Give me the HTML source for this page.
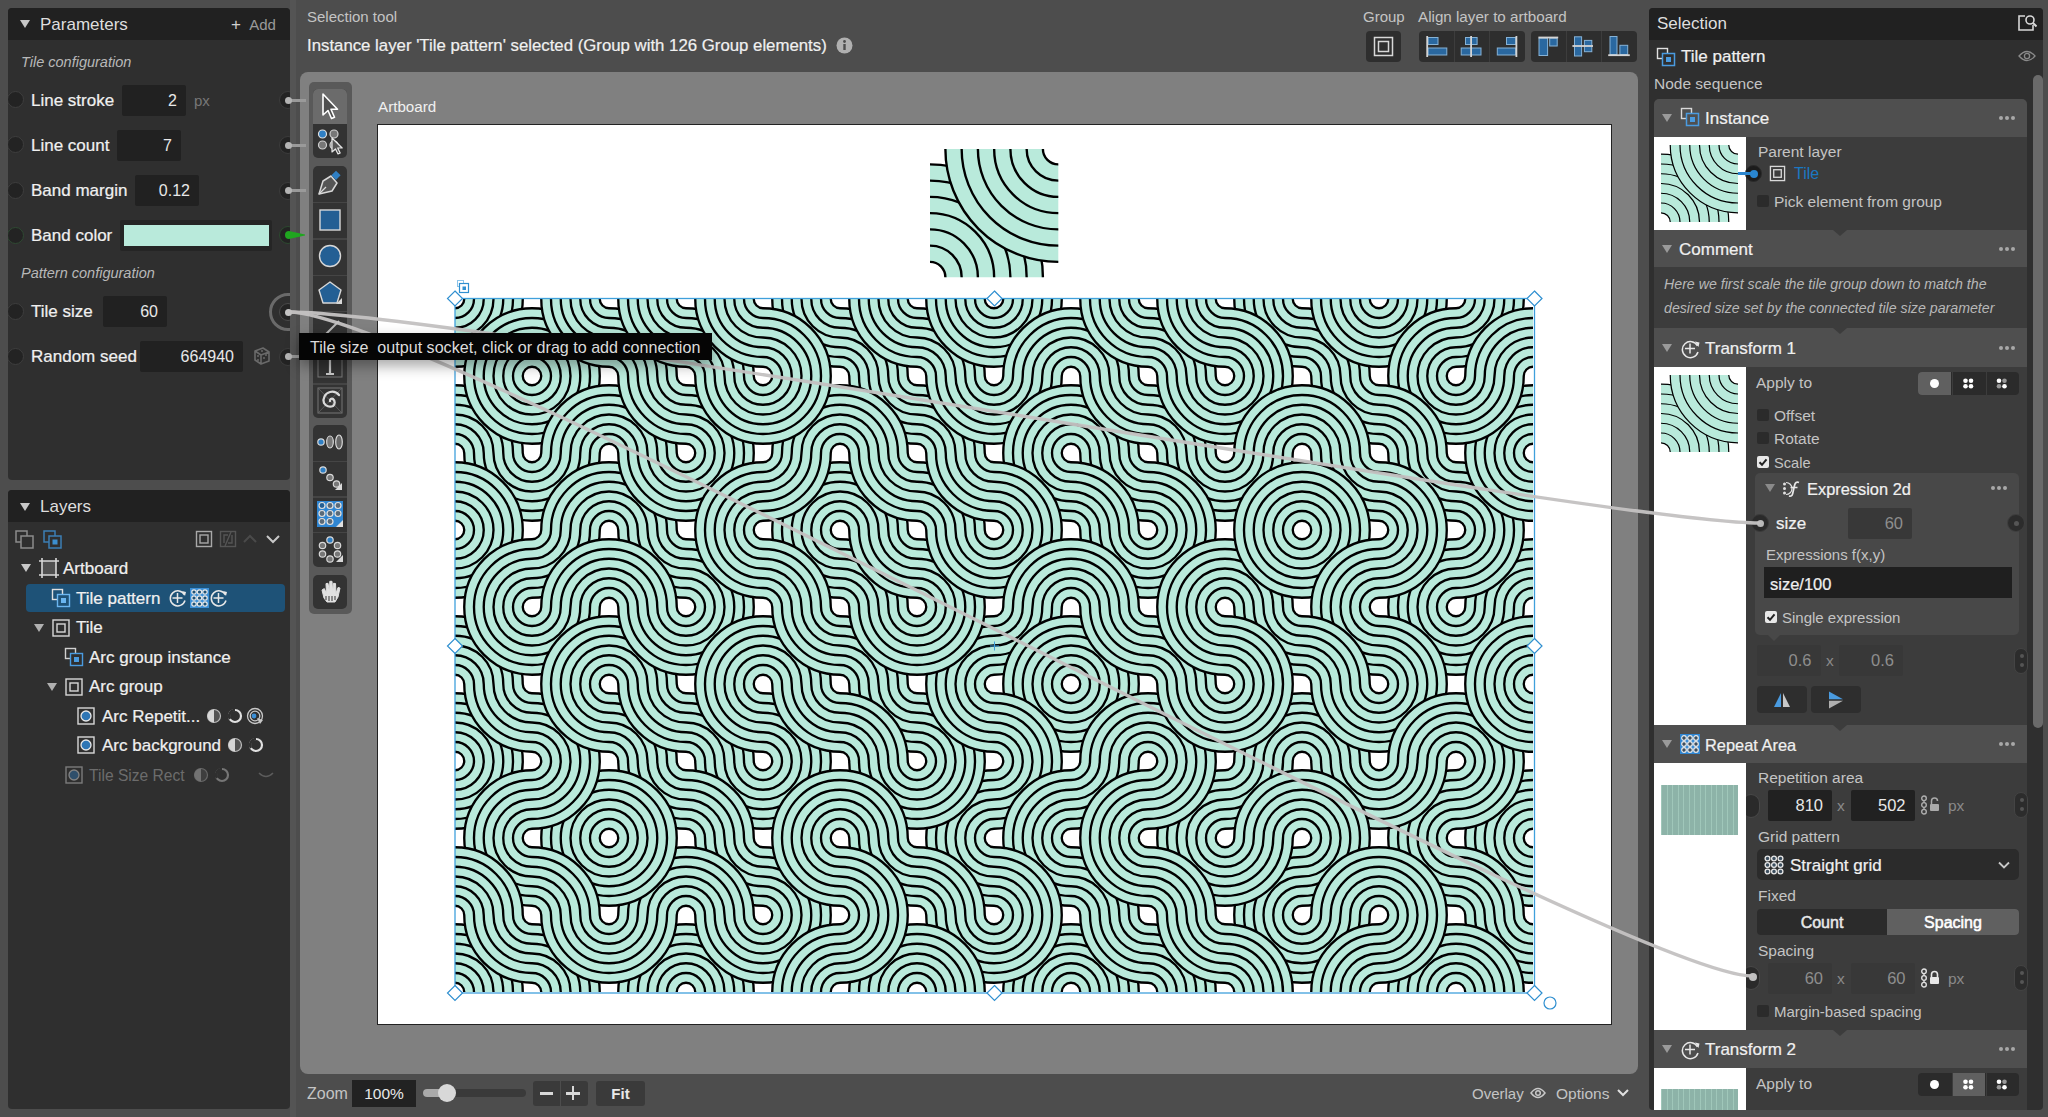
<!DOCTYPE html><html><head><meta charset="utf-8"><title>Tile pattern</title><style>*{box-sizing:border-box}
html,body{margin:0;padding:0}
body{width:2048px;height:1117px;overflow:hidden;background:#4d4d4d;font-family:"Liberation Sans",sans-serif;color:#e6e6e6;font-size:16px;position:relative}
.abs{position:absolute}
.panel{position:absolute;background:#2f2f2f;border-radius:4px;overflow:hidden}
.phead{position:absolute;left:0;top:0;right:0;height:32px;background:#212121}
.t{position:absolute;white-space:nowrap;line-height:20px;height:20px;margin-top:1px}
.w{color:#f0f0f0;-webkit-text-stroke:.22px #f0f0f0}
.g{color:#c4c4c4}
.dim{color:#8a8a8a}
.it{font-style:italic;color:#b8b8b8}
.inp{position:absolute;background:#212121;border-radius:2px;height:31px;color:#e8e8e8;text-align:right;padding-right:9px;line-height:31px;font-size:16px}
.inpd{background:#383838;color:#8e8e8e}
.sockL{position:absolute;width:17px;height:17px;border-radius:50%;background:#232323;border:1.5px solid #3e3e3e}
.sockR{position:absolute;width:18px;height:18px;border-radius:50%;background:#232323;border:1.5px solid #3c3c3c}
.dot{position:absolute;width:7px;height:7px;border-radius:50%;background:#b4b4b4}
.stem{position:absolute;height:3px;background:#9a9a9a}
.cb{position:absolute;width:12px;height:12px;background:#2b2b2b;border-radius:2px}
.cbc{position:absolute;width:12px;height:12px;background:#e8e8e8;border-radius:2px}
.tri{position:absolute;width:0;height:0;border-left:5px solid transparent;border-right:5px solid transparent;border-top:8px solid #c8c8c8}
.tb{position:absolute;left:313px;width:34px;background:#333;}
.nh{position:absolute;left:0;width:373px;background:#4f4f4f}
.nb{position:absolute;left:0;width:373px;background:#3c3c3c}
.thumb{position:absolute;left:0;width:92px;background:#fff}
.dots3{position:absolute;width:16px;height:4px}
.dots3 i{position:absolute;top:0;width:4px;height:4px;border-radius:50%;background:#a8a8a8}
.notch{position:absolute;width:0;height:0;border-left:7px solid transparent;border-right:7px solid transparent;border-top:6px solid #3c3c3c}

.ht{color:#dedede;-webkit-text-stroke:0}
</style></head><body><!-- PARAMETERS PANEL -->
<div class="panel" style="left:8px;top:8px;width:282px;height:472px">
 <div class="phead"></div>
 <div class="tri" style="left:12px;top:12px"></div>
 <div class="t ht" style="left:32px;top:6px;font-size:17px">Parameters</div>
 <div class="t g" style="left:223px;top:6px;font-size:15px;color:#9a9a9a"><span style="color:#d0d0d0;font-size:17px">+</span>&nbsp;&nbsp;Add</div>
 <div class="t it" style="left:13px;top:43px;font-size:14.5px">Tile configuration</div>
 <div class="t it" style="left:13px;top:254px;font-size:14.5px">Pattern configuration</div>

 <div class="t w" style="left:23px;top:82px;font-size:17px">Line stroke</div>
 <div class="inp" style="left:114px;top:77px;width:64px">2</div>
 <div class="t dim" style="left:186px;top:82px;font-size:15px;color:#777">px</div>

 <div class="t w" style="left:23px;top:127px;font-size:17px">Line count</div>
 <div class="inp" style="left:109px;top:122px;width:64px">7</div>

 <div class="t w" style="left:23px;top:172px;font-size:17px">Band margin</div>
 <div class="inp" style="left:127px;top:167px;width:64px">0.12</div>

 <div class="t w" style="left:23px;top:217px;font-size:17px">Band color</div>
 <div class="abs" style="left:112px;top:212px;width:152px;height:31px;background:#252525;border-radius:2px"></div>
 <div class="abs" style="left:116px;top:217px;width:145px;height:21px;background:#b9eadb"></div>

 <div class="t w" style="left:23px;top:293px;font-size:17px">Tile size</div>
 <div class="inp" style="left:95px;top:288px;width:64px">60</div>

 <div class="t w" style="left:23px;top:338px;font-size:17px">Random seed</div>
 <div class="inp" style="left:132px;top:333px;width:103px">664940</div>
 <svg class="abs" style="left:245px;top:338px" width="18" height="20" viewBox="0 0 18 20"><path d="M2 5L10 2L16 6L16 15L8 18L2 14Z M2 5L8 9L16 6M8 9L8 18" fill="none" stroke="#6a6a6a" stroke-width="1.6" stroke-linejoin="round"/><circle cx="5" cy="10" r="1" fill="#6a6a6a"/><circle cx="5" cy="14" r="1" fill="#6a6a6a"/><circle cx="11" cy="12" r="1" fill="#6a6a6a"/><circle cx="13" cy="9" r="1" fill="#6a6a6a"/><circle cx="9" cy="5" r="1" fill="#6a6a6a"/></svg>

 <!-- left sockets -->
 <div class="sockL" style="left:-1px;top:83px"></div>
 <div class="sockL" style="left:-1px;top:128px"></div>
 <div class="sockL" style="left:-1px;top:174px"></div>
 <div class="sockL" style="left:-1px;top:219px;border-color:#2f4a33"></div>
 <div class="sockL" style="left:-1px;top:295px"></div>
 <div class="sockL" style="left:-1px;top:340px"></div>
 <!-- right sockets (clipped by panel) -->
 <div class="sockR" style="left:271px;top:83px"></div>
 <div class="sockR" style="left:271px;top:128px"></div>
 <div class="sockR" style="left:271px;top:173.500px"></div>
 <div class="sockR" style="left:271px;top:218px;border-color:#2d4a30"></div>
 <div class="abs" style="left:261px;top:285px;width:38px;height:38px;border-radius:50%;border:3px solid #6a6a6a"></div>
 <div class="sockR" style="left:271px;top:295px;background:#242424;border-color:#4a4a4a"></div>
 <div class="sockR" style="left:271px;top:339.500px"></div>
</div>
<!-- LAYERS PANEL -->
<div class="panel" style="left:8px;top:490px;width:282px;height:619px">
 <div class="phead"></div>
 <div class="tri" style="left:12px;top:13px"></div>
 <div class="t ht" style="left:32px;top:6px;font-size:17px">Layers</div>
 
 <!-- toolbar icons -->
 <svg class="abs" style="left:6px;top:39px" width="60" height="22" viewBox="0 0 60 22"><g fill="none" stroke="#8c8c8c" stroke-width="1.5"><rect x="2" y="2" width="11" height="11"/><rect x="7" y="7" width="12" height="12" fill="#2f2f2f"/></g><g fill="none" stroke="#3c7fb5" stroke-width="1.5"><rect x="30" y="2" width="11" height="11"/><rect x="35" y="7" width="12" height="12" fill="#2f2f2f"/></g><rect x="38.5" y="10.5" width="5" height="5" fill="#3c8fd0"/></svg>
 <svg class="abs" style="left:186px;top:39px" width="92" height="22" viewBox="0 0 92 22"><g fill="none" stroke="#a8a8a8" stroke-width="1.4"><rect x="2.5" y="2.5" width="15" height="15"/><rect x="6" y="6" width="8" height="8"/></g><g fill="none" stroke="#555" stroke-width="1.4"><rect x="26.500" y="2.5" width="15" height="15"/><path d="M30 14V6h4M38 6v8h-4M37 3l-6 14"/></g><path d="M50 13l6-6 6 6" fill="none" stroke="#4a4a4a" stroke-width="2"/><path d="M73 7l6 6 6-6" fill="none" stroke="#c8c8c8" stroke-width="2"/></svg>

 <!-- rows -->
 <div class="tri" style="left:13px;top:74px"></div>
 <svg class="abs" style="left:30px;top:67px" width="22" height="22" viewBox="0 0 22 22"><rect x="4" y="4" width="14" height="14" fill="#505050"/><path d="M4 1v20M18 1v20M1 4h20M1 18h20" stroke="#d8d8d8" stroke-width="1.6" fill="none"/></svg>
 <div class="t w" style="left:55px;top:68px;font-size:17px">Artboard</div>

 <div class="abs" style="left:18px;top:94px;width:259px;height:28px;background:#1e5277;border-radius:4px"></div>
 <svg class="abs" style="left:43px;top:98px" width="20" height="20" viewBox="0 0 20 20"><g fill="none" stroke="#e0e0e0" stroke-width="1.4"><rect x="1.5" y="1.500" width="10" height="10"/></g><rect x="6.5" y="6.5" width="12" height="12" fill="#1e5277" stroke="#6bb6f0" stroke-width="1.4"/><rect x="10" y="10" width="5" height="5" fill="#6bb6f0"/></svg>
 <div class="t w" style="left:68px;top:98px;font-size:17px">Tile pattern</div>
 <svg class="abs" style="left:160px;top:97px" width="62" height="22" viewBox="0 0 62 22"><g fill="none" stroke="#e8e8e8" stroke-width="1.5"><path d="M16.500 8a7.500 7.500 0 1 0 .5 5.500"/><path d="M9.500 6v10M4.500 11h10"/><path d="M57.500 8a7.500 7.500 0 1 0 .5 5.500"/><path d="M50.500 6v10M45.500 11h10"/></g><path d="M14 4l4 1-1 4z" fill="#e8e8e8"/><path d="M55 4l4 1-1 4z" fill="#e8e8e8"/><rect x="22" y="1" width="19" height="20" fill="#3b8fd6"/><g fill="#1e5277" stroke="#e8e8e8" stroke-width="1.2"><circle cx="26" cy="5" r="2.200"/><circle cx="31.500" cy="5" r="2.200"/><circle cx="37" cy="5" r="2.200"/><circle cx="26" cy="11" r="2.200"/><circle cx="31.500" cy="11" r="2.200"/><circle cx="37" cy="11" r="2.200"/><circle cx="26" cy="17" r="2.200"/><circle cx="31.500" cy="17" r="2.200"/><circle cx="37" cy="17" r="2.200"/></g></svg>

 <div class="tri" style="left:26px;top:134px;border-top-color:#b0b0b0"></div>
 <svg class="abs" style="left:43px;top:128px" width="20" height="20" viewBox="0 0 20 20"><g fill="none" stroke="#d8d8d8" stroke-width="1.4"><rect x="2" y="2" width="16" height="16"/><rect x="6" y="6" width="8" height="8"/></g></svg>
 <div class="t w" style="left:68px;top:127px;font-size:17px">Tile</div>

 <svg class="abs" style="left:56px;top:157px" width="20" height="20" viewBox="0 0 20 20"><g fill="none" stroke="#d0d0d0" stroke-width="1.4"><rect x="1.5" y="1.500" width="10" height="10"/></g><rect x="6.5" y="6.5" width="12" height="12" fill="#2f2f2f" stroke="#4a9be0" stroke-width="1.4"/><rect x="10" y="10" width="5" height="5" fill="#4a9be0"/></svg>
 <div class="t w" style="left:81px;top:157px;font-size:17px">Arc group instance</div>

 <div class="tri" style="left:39px;top:193px;border-top-color:#b0b0b0"></div>
 <svg class="abs" style="left:56px;top:187px" width="20" height="20" viewBox="0 0 20 20"><g fill="none" stroke="#d8d8d8" stroke-width="1.4"><rect x="2" y="2" width="16" height="16"/><rect x="6" y="6" width="8" height="8"/></g></svg>
 <div class="t w" style="left:81px;top:186px;font-size:17px">Arc group</div>

 <svg class="abs" style="left:68px;top:216px" width="20" height="20" viewBox="0 0 20 20"><rect x="2" y="2" width="16" height="16" fill="none" stroke="#d8d8d8" stroke-width="1.4"/><circle cx="10" cy="10" r="5" fill="#2f76b5" stroke="#e8e8e8" stroke-width="1.3"/></svg>
 <div class="t w" style="left:94px;top:216px;font-size:17px">Arc Repetit...</div>
 <svg class="abs" style="left:197px;top:216px" width="64" height="20" viewBox="0 0 64 20"><circle cx="9" cy="10" r="6.500" fill="#555" stroke="#bbb" stroke-width="1.2"/><path d="M9 3.500a6.500 6.500 0 0 0 0 13z" fill="#d8d8d8"/><circle cx="30" cy="10" r="6" fill="none" stroke="#e0e0e0" stroke-width="2.200"/><path d="M30 4a6 6 0 0 0-5 9" stroke="#2f2f2f" stroke-width="2.600" fill="none"/><circle cx="50" cy="10" r="7.500" fill="none" stroke="#c8c8c8" stroke-width="1.300"/><circle cx="50" cy="10" r="4.800" fill="none" stroke="#c8c8c8" stroke-width="1.300"/><circle cx="49" cy="10" r="2.400" fill="#3b8fd6"/><path d="M52 12l6 2-3 4z" fill="#c8c8c8"/></svg>

 <svg class="abs" style="left:68px;top:245px" width="20" height="20" viewBox="0 0 20 20"><rect x="2" y="2" width="16" height="16" fill="none" stroke="#d8d8d8" stroke-width="1.4"/><circle cx="10" cy="10" r="5" fill="#2f76b5" stroke="#e8e8e8" stroke-width="1.3"/></svg>
 <div class="t w" style="left:94px;top:245px;font-size:17px">Arc background</div>
 <svg class="abs" style="left:218px;top:245px" width="44" height="20" viewBox="0 0 44 20"><circle cx="9" cy="10" r="6.500" fill="#555" stroke="#bbb" stroke-width="1.2"/><path d="M9 3.500a6.500 6.500 0 0 0 0 13z" fill="#d8d8d8"/><circle cx="30" cy="10" r="6" fill="none" stroke="#e0e0e0" stroke-width="2.200"/><path d="M30 4a6 6 0 0 0-5 9" stroke="#2f2f2f" stroke-width="2.600" fill="none"/></svg>

 <svg class="abs" style="left:56px;top:275px;opacity:.45" width="20" height="20" viewBox="0 0 20 20"><rect x="2" y="2" width="16" height="16" fill="none" stroke="#d8d8d8" stroke-width="1.4"/><circle cx="10" cy="10" r="5" fill="#2f76b5" stroke="#e8e8e8" stroke-width="1.3"/></svg>
 <div class="t" style="left:81px;top:275px;font-size:15.600px;color:#6c6c6c">Tile Size Rect</div>
 <svg class="abs" style="left:184px;top:275px;opacity:.4" width="44" height="20" viewBox="0 0 44 20"><circle cx="9" cy="10" r="6.500" fill="#555" stroke="#bbb" stroke-width="1.2"/><path d="M9 3.500a6.500 6.500 0 0 0 0 13z" fill="#d8d8d8"/><circle cx="30" cy="10" r="6" fill="none" stroke="#e0e0e0" stroke-width="2.200"/><path d="M30 4a6 6 0 0 0-5 9" stroke="#2f2f2f" stroke-width="2.600" fill="none"/></svg>
 <svg class="abs" style="left:249px;top:279px" width="18" height="12" viewBox="0 0 18 12"><path d="M2 4q7 7 14 0" fill="none" stroke="#5c5c5c" stroke-width="1.500"/></svg>
</div>

<!-- TOP BAR -->
<div class="abs" style="left:290px;top:0;width:5.500px;height:1117px;background:#545454"></div>
<div class="t g" style="margin-top:0;left:307px;top:6.500px;font-size:15px">Selection tool</div>
<div class="t" style="margin-top:0;color:#f0f0f0;-webkit-text-stroke:.2px #f0f0f0;left:307px;top:36px;font-size:16.800px">Instance layer 'Tile pattern' selected (Group with 126 Group elements)</div>
<svg class="abs" style="left:836px;top:37px" width="17" height="17" viewBox="0 0 17 17"><circle cx="8.500" cy="8.500" r="8" fill="#b0b0b0"/><rect x="7.300" y="7" width="2.400" height="6" fill="#4d4d4d"/><circle cx="8.500" cy="4.500" r="1.400" fill="#4d4d4d"/></svg>
<div class="t g" style="margin-top:0;left:1363px;top:7px;font-size:15px">Group</div>
<div class="t g" style="margin-top:0;left:1418px;top:7px;font-size:15.200px">Align layer to artboard</div>
<div class="abs" style="left:1366px;top:31px;width:35px;height:31px;background:#2e2e2e;border-radius:4px"></div>
<svg class="abs" style="left:1373px;top:36px" width="21" height="21" viewBox="0 0 21 21"><g fill="none" stroke="#d8d8d8" stroke-width="1.500"><rect x="1.500" y="1.500" width="18" height="18"/><rect x="5.500" y="5.500" width="10" height="10"/></g></svg>
<div class="abs" style="left:1419px;top:31px;width:106px;height:31px;background:#2e2e2e;border-radius:4px"></div>
<div class="abs" style="left:1454px;top:31px;width:1px;height:31px;background:#3d3d3d"></div><div class="abs" style="left:1489px;top:31px;width:1px;height:31px;background:#3d3d3d"></div>
<div class="abs" style="left:1531px;top:31px;width:106px;height:31px;background:#2e2e2e;border-radius:4px"></div>
<div class="abs" style="left:1566px;top:31px;width:1px;height:31px;background:#3d3d3d"></div><div class="abs" style="left:1601px;top:31px;width:1px;height:31px;background:#3d3d3d"></div>
<svg class="abs" style="left:1419px;top:31px" width="218" height="31" viewBox="0 0 218 31">
 <g fill="#2a68a0" stroke="#86b2d6" stroke-width="1">
  <rect x="9" y="6.500" width="10" height="7"/><rect x="9" y="17" width="18.800" height="7"/>
  <rect x="46.500" y="6.500" width="11.600" height="7"/><rect x="42.200" y="17" width="19.800" height="7"/>
  <rect x="87.500" y="6.500" width="9.200" height="7"/><rect x="78.300" y="17" width="18.400" height="7"/>
  <rect x="120" y="7.200" width="8.600" height="17.300"/><rect x="130.700" y="7.200" width="7.500" height="7.800"/>
  <rect x="155.500" y="5.800" width="7.100" height="19.200"/><rect x="165.400" y="9.400" width="7.400" height="11.300"/>
  <rect x="191" y="5.500" width="7" height="18"/><rect x="200.900" y="14.300" width="7.800" height="9.200"/>
 </g>
 <g stroke="#d4d4d4" stroke-width="1.800" fill="none">
  <path d="M8.200 5v21"/><path d="M52.100 5v21"/><path d="M97.400 5v21"/>
  <path d="M119.400 6.500h19.800"/><path d="M153.400 15h20.600"/><path d="M189.200 24.200h21.600"/>
 </g>
</svg>

<!-- BOTTOM BAR -->
<div class="t g" style="left:307px;top:1083px;font-size:16px">Zoom</div>
<div class="abs" style="left:352px;top:1080px;width:64px;height:27px;background:#222;color:#e8e8e8;text-align:center;line-height:27px;font-size:15.500px">100%</div>
<div class="abs" style="left:423px;top:1089px;width:103px;height:8px;border-radius:4px;background:#3a3a3a"></div>
<div class="abs" style="left:423px;top:1089px;width:24px;height:8px;border-radius:4px;background:#aaa"></div>
<div class="abs" style="left:438px;top:1084px;width:18px;height:18px;border-radius:50%;background:#d8d8d8"></div>
<div class="abs" style="left:533px;top:1080.500px;width:55px;height:25.500px;background:#3a3a3a;border-radius:3px"></div>
<div class="abs" style="left:560px;top:1080.500px;width:1px;height:25.500px;background:#4d4d4d"></div>
<div class="abs" style="left:540px;top:1092px;width:13px;height:2.500px;background:#d8d8d8"></div>
<div class="abs" style="left:566px;top:1092px;width:14px;height:2.500px;background:#d8d8d8"></div><div class="abs" style="left:571.700px;top:1086px;width:2.500px;height:14px;background:#d8d8d8"></div>
<div class="abs" style="left:596px;top:1080.500px;width:49px;height:25.500px;background:#3a3a3a;border-radius:3px;text-align:center;line-height:25.500px;font-size:15px;font-weight:bold;color:#e8e8e8">Fit</div>
<div class="t g" style="left:1472px;top:1083px;font-size:15px">Overlay</div>
<svg class="abs" style="left:1530px;top:1087px" width="16" height="12" viewBox="0 0 16 12"><path d="M1 6q7-9 14 0q-7 9-14 0z" fill="none" stroke="#c8c8c8" stroke-width="1.500"/><circle cx="8" cy="6" r="2.300" fill="none" stroke="#c8c8c8" stroke-width="1.500"/></svg>
<div class="t g" style="left:1556px;top:1083px;font-size:15.500px">Options</div>
<svg class="abs" style="left:1616px;top:1088px" width="14" height="10" viewBox="0 0 14 10"><path d="M2 2l5 5 5-5" fill="none" stroke="#e0e0e0" stroke-width="2"/></svg>

<!-- CANVAS AREA -->
<div class="abs" style="left:300px;top:72px;width:1338px;height:1002px;background:#808080;border-radius:8px"></div>
<div class="t" style="margin-top:0;left:378px;top:97px;font-size:15.200px;color:#f0f0f0">Artboard</div>
<div class="abs" style="left:377px;top:124px;width:1235px;height:901px;background:#fff;border:1px solid #222"></div>
<!-- big tile -->
<svg class="abs" style="left:930.300px;top:149.300px" width="128.300" height="128.300" viewBox="0 0 100 100"><g><path d="M0 12A88 88 0 0 1 88 100L12 100A12 12 0 0 0 0 88Z" fill="#b9eadb"/><path d="M0 88.000A12.000 12.000 0 0 1 12.000 100M0 75.333A24.667 24.667 0 0 1 24.667 100M0 62.667A37.333 37.333 0 0 1 37.333 100M0 50.000A50.000 50.000 0 0 1 50.000 100M0 37.333A62.667 62.667 0 0 1 62.667 100M0 24.667A75.333 75.333 0 0 1 75.333 100M0 12.000A88.000 88.000 0 0 1 88.000 100" fill="none" stroke="#000" stroke-width="1.85"/><path d="M12 0A88 88 0 0 0 100 88L100 12A12 12 0 0 1 88 0Z" fill="#b9eadb"/><path d="M88.000 0A12.000 12.000 0 0 0 100 12.000M75.333 0A24.667 24.667 0 0 0 100 24.667M62.667 0A37.333 37.333 0 0 0 100 37.333M50.000 0A50.000 50.000 0 0 0 100 50.000M37.333 0A62.667 62.667 0 0 0 100 62.667M24.667 0A75.333 75.333 0 0 0 100 75.333M12.000 0A88.000 88.000 0 0 0 100 88.000" fill="none" stroke="#000" stroke-width="1.85"/></g></svg>
<svg style="position:absolute;left:455px;top:299px" width="1078.00" height="693.00" viewBox="0 0 840 540" preserveAspectRatio="none"><defs><g id="tl"><path d="M0 12A88 88 0 0 1 88 100L12 100A12 12 0 0 0 0 88Z" fill="#b9eadb"/><path d="M0 88.000A12.000 12.000 0 0 1 12.000 100M0 75.333A24.667 24.667 0 0 1 24.667 100M0 62.667A37.333 37.333 0 0 1 37.333 100M0 50.000A50.000 50.000 0 0 1 50.000 100M0 37.333A62.667 62.667 0 0 1 62.667 100M0 24.667A75.333 75.333 0 0 1 75.333 100M0 12.000A88.000 88.000 0 0 1 88.000 100" fill="none" stroke="#000" stroke-width="3.05"/><path d="M12 0A88 88 0 0 0 100 88L100 12A12 12 0 0 1 88 0Z" fill="#b9eadb"/><path d="M88.000 0A12.000 12.000 0 0 0 100 12.000M75.333 0A24.667 24.667 0 0 0 100 24.667M62.667 0A37.333 37.333 0 0 0 100 37.333M50.000 0A50.000 50.000 0 0 0 100 50.000M37.333 0A62.667 62.667 0 0 0 100 62.667M24.667 0A75.333 75.333 0 0 0 100 75.333M12.000 0A88.000 88.000 0 0 0 100 88.000" fill="none" stroke="#000" stroke-width="3.05"/></g></defs><use href="#tl" transform="translate(0 0) scale(.6) rotate(90 50 50)"/><use href="#tl" transform="translate(60 0) scale(.6) rotate(0 50 50)"/><use href="#tl" transform="translate(120 0) scale(.6) rotate(0 50 50)"/><use href="#tl" transform="translate(180 0) scale(.6) rotate(0 50 50)"/><use href="#tl" transform="translate(240 0) scale(.6) rotate(180 50 50)"/><use href="#tl" transform="translate(300 0) scale(.6) rotate(0 50 50)"/><use href="#tl" transform="translate(360 0) scale(.6) rotate(0 50 50)"/><use href="#tl" transform="translate(420 0) scale(.6) rotate(90 50 50)"/><use href="#tl" transform="translate(480 0) scale(.6) rotate(0 50 50)"/><use href="#tl" transform="translate(540 0) scale(.6) rotate(0 50 50)"/><use href="#tl" transform="translate(600 0) scale(.6) rotate(180 50 50)"/><use href="#tl" transform="translate(660 0) scale(.6) rotate(0 50 50)"/><use href="#tl" transform="translate(720 0) scale(.6) rotate(90 50 50)"/><use href="#tl" transform="translate(780 0) scale(.6) rotate(90 50 50)"/><use href="#tl" transform="translate(0 60) scale(.6) rotate(0 50 50)"/><use href="#tl" transform="translate(60 60) scale(.6) rotate(90 50 50)"/><use href="#tl" transform="translate(120 60) scale(.6) rotate(0 50 50)"/><use href="#tl" transform="translate(180 60) scale(.6) rotate(0 50 50)"/><use href="#tl" transform="translate(240 60) scale(.6) rotate(270 50 50)"/><use href="#tl" transform="translate(300 60) scale(.6) rotate(180 50 50)"/><use href="#tl" transform="translate(360 60) scale(.6) rotate(0 50 50)"/><use href="#tl" transform="translate(420 60) scale(.6) rotate(90 50 50)"/><use href="#tl" transform="translate(480 60) scale(.6) rotate(0 50 50)"/><use href="#tl" transform="translate(540 60) scale(.6) rotate(0 50 50)"/><use href="#tl" transform="translate(600 60) scale(.6) rotate(90 50 50)"/><use href="#tl" transform="translate(660 60) scale(.6) rotate(180 50 50)"/><use href="#tl" transform="translate(720 60) scale(.6) rotate(180 50 50)"/><use href="#tl" transform="translate(780 60) scale(.6) rotate(270 50 50)"/><use href="#tl" transform="translate(0 120) scale(.6) rotate(180 50 50)"/><use href="#tl" transform="translate(60 120) scale(.6) rotate(90 50 50)"/><use href="#tl" transform="translate(120 120) scale(.6) rotate(0 50 50)"/><use href="#tl" transform="translate(180 120) scale(.6) rotate(90 50 50)"/><use href="#tl" transform="translate(240 120) scale(.6) rotate(270 50 50)"/><use href="#tl" transform="translate(300 120) scale(.6) rotate(0 50 50)"/><use href="#tl" transform="translate(360 120) scale(.6) rotate(0 50 50)"/><use href="#tl" transform="translate(420 120) scale(.6) rotate(180 50 50)"/><use href="#tl" transform="translate(480 120) scale(.6) rotate(180 50 50)"/><use href="#tl" transform="translate(540 120) scale(.6) rotate(180 50 50)"/><use href="#tl" transform="translate(600 120) scale(.6) rotate(90 50 50)"/><use href="#tl" transform="translate(660 120) scale(.6) rotate(180 50 50)"/><use href="#tl" transform="translate(720 120) scale(.6) rotate(180 50 50)"/><use href="#tl" transform="translate(780 120) scale(.6) rotate(0 50 50)"/><use href="#tl" transform="translate(0 180) scale(.6) rotate(90 50 50)"/><use href="#tl" transform="translate(60 180) scale(.6) rotate(90 50 50)"/><use href="#tl" transform="translate(120 180) scale(.6) rotate(180 50 50)"/><use href="#tl" transform="translate(180 180) scale(.6) rotate(0 50 50)"/><use href="#tl" transform="translate(240 180) scale(.6) rotate(180 50 50)"/><use href="#tl" transform="translate(300 180) scale(.6) rotate(0 50 50)"/><use href="#tl" transform="translate(360 180) scale(.6) rotate(0 50 50)"/><use href="#tl" transform="translate(420 180) scale(.6) rotate(90 50 50)"/><use href="#tl" transform="translate(480 180) scale(.6) rotate(180 50 50)"/><use href="#tl" transform="translate(540 180) scale(.6) rotate(90 50 50)"/><use href="#tl" transform="translate(600 180) scale(.6) rotate(0 50 50)"/><use href="#tl" transform="translate(660 180) scale(.6) rotate(90 50 50)"/><use href="#tl" transform="translate(720 180) scale(.6) rotate(270 50 50)"/><use href="#tl" transform="translate(780 180) scale(.6) rotate(270 50 50)"/><use href="#tl" transform="translate(0 240) scale(.6) rotate(0 50 50)"/><use href="#tl" transform="translate(60 240) scale(.6) rotate(90 50 50)"/><use href="#tl" transform="translate(120 240) scale(.6) rotate(0 50 50)"/><use href="#tl" transform="translate(180 240) scale(.6) rotate(90 50 50)"/><use href="#tl" transform="translate(240 240) scale(.6) rotate(0 50 50)"/><use href="#tl" transform="translate(300 240) scale(.6) rotate(0 50 50)"/><use href="#tl" transform="translate(360 240) scale(.6) rotate(270 50 50)"/><use href="#tl" transform="translate(420 240) scale(.6) rotate(90 50 50)"/><use href="#tl" transform="translate(480 240) scale(.6) rotate(0 50 50)"/><use href="#tl" transform="translate(540 240) scale(.6) rotate(0 50 50)"/><use href="#tl" transform="translate(600 240) scale(.6) rotate(180 50 50)"/><use href="#tl" transform="translate(660 240) scale(.6) rotate(180 50 50)"/><use href="#tl" transform="translate(720 240) scale(.6) rotate(180 50 50)"/><use href="#tl" transform="translate(780 240) scale(.6) rotate(90 50 50)"/><use href="#tl" transform="translate(0 300) scale(.6) rotate(0 50 50)"/><use href="#tl" transform="translate(60 300) scale(.6) rotate(0 50 50)"/><use href="#tl" transform="translate(120 300) scale(.6) rotate(0 50 50)"/><use href="#tl" transform="translate(180 300) scale(.6) rotate(0 50 50)"/><use href="#tl" transform="translate(240 300) scale(.6) rotate(0 50 50)"/><use href="#tl" transform="translate(300 300) scale(.6) rotate(180 50 50)"/><use href="#tl" transform="translate(360 300) scale(.6) rotate(0 50 50)"/><use href="#tl" transform="translate(420 300) scale(.6) rotate(180 50 50)"/><use href="#tl" transform="translate(480 300) scale(.6) rotate(90 50 50)"/><use href="#tl" transform="translate(540 300) scale(.6) rotate(0 50 50)"/><use href="#tl" transform="translate(600 300) scale(.6) rotate(270 50 50)"/><use href="#tl" transform="translate(660 300) scale(.6) rotate(0 50 50)"/><use href="#tl" transform="translate(720 300) scale(.6) rotate(90 50 50)"/><use href="#tl" transform="translate(780 300) scale(.6) rotate(0 50 50)"/><use href="#tl" transform="translate(0 360) scale(.6) rotate(90 50 50)"/><use href="#tl" transform="translate(60 360) scale(.6) rotate(270 50 50)"/><use href="#tl" transform="translate(120 360) scale(.6) rotate(180 50 50)"/><use href="#tl" transform="translate(180 360) scale(.6) rotate(180 50 50)"/><use href="#tl" transform="translate(240 360) scale(.6) rotate(90 50 50)"/><use href="#tl" transform="translate(300 360) scale(.6) rotate(180 50 50)"/><use href="#tl" transform="translate(360 360) scale(.6) rotate(270 50 50)"/><use href="#tl" transform="translate(420 360) scale(.6) rotate(90 50 50)"/><use href="#tl" transform="translate(480 360) scale(.6) rotate(90 50 50)"/><use href="#tl" transform="translate(540 360) scale(.6) rotate(270 50 50)"/><use href="#tl" transform="translate(600 360) scale(.6) rotate(90 50 50)"/><use href="#tl" transform="translate(660 360) scale(.6) rotate(180 50 50)"/><use href="#tl" transform="translate(720 360) scale(.6) rotate(270 50 50)"/><use href="#tl" transform="translate(780 360) scale(.6) rotate(270 50 50)"/><use href="#tl" transform="translate(0 420) scale(.6) rotate(180 50 50)"/><use href="#tl" transform="translate(60 420) scale(.6) rotate(180 50 50)"/><use href="#tl" transform="translate(120 420) scale(.6) rotate(270 50 50)"/><use href="#tl" transform="translate(180 420) scale(.6) rotate(180 50 50)"/><use href="#tl" transform="translate(240 420) scale(.6) rotate(0 50 50)"/><use href="#tl" transform="translate(300 420) scale(.6) rotate(180 50 50)"/><use href="#tl" transform="translate(360 420) scale(.6) rotate(180 50 50)"/><use href="#tl" transform="translate(420 420) scale(.6) rotate(180 50 50)"/><use href="#tl" transform="translate(480 420) scale(.6) rotate(0 50 50)"/><use href="#tl" transform="translate(540 420) scale(.6) rotate(180 50 50)"/><use href="#tl" transform="translate(600 420) scale(.6) rotate(270 50 50)"/><use href="#tl" transform="translate(660 420) scale(.6) rotate(90 50 50)"/><use href="#tl" transform="translate(720 420) scale(.6) rotate(180 50 50)"/><use href="#tl" transform="translate(780 420) scale(.6) rotate(180 50 50)"/><use href="#tl" transform="translate(0 480) scale(.6) rotate(0 50 50)"/><use href="#tl" transform="translate(60 480) scale(.6) rotate(0 50 50)"/><use href="#tl" transform="translate(120 480) scale(.6) rotate(270 50 50)"/><use href="#tl" transform="translate(180 480) scale(.6) rotate(0 50 50)"/><use href="#tl" transform="translate(240 480) scale(.6) rotate(90 50 50)"/><use href="#tl" transform="translate(300 480) scale(.6) rotate(270 50 50)"/><use href="#tl" transform="translate(360 480) scale(.6) rotate(180 50 50)"/><use href="#tl" transform="translate(420 480) scale(.6) rotate(270 50 50)"/><use href="#tl" transform="translate(480 480) scale(.6) rotate(0 50 50)"/><use href="#tl" transform="translate(540 480) scale(.6) rotate(0 50 50)"/><use href="#tl" transform="translate(600 480) scale(.6) rotate(180 50 50)"/><use href="#tl" transform="translate(660 480) scale(.6) rotate(90 50 50)"/><use href="#tl" transform="translate(720 480) scale(.6) rotate(270 50 50)"/><use href="#tl" transform="translate(780 480) scale(.6) rotate(180 50 50)"/></svg>
<!-- selection frame -->
<svg class="abs" style="left:440px;top:275px" width="1125" height="745" viewBox="440 275 1125 745">
 <rect x="455" y="298.500" width="1079.500" height="694.500" fill="none" stroke="#3fa0dc" stroke-width="1.300"/>
 <g fill="#fff" stroke="#2f8fd0" stroke-width="1.200">
  <path d="M455 291l7.500 7.500-7.500 7.500-7.500-7.500z"/><path d="M994.500 291l7.500 7.500-7.500 7.500-7.500-7.500z"/><path d="M1534.500 291l7.500 7.500-7.500 7.500-7.500-7.500z"/>
  <path d="M455 638.500l7.500 7.500-7.500 7.500-7.500-7.500z"/><path d="M1534.500 638.500l7.500 7.500-7.500 7.500-7.500-7.500z"/>
  <path d="M455 985.500l7.500 7.500-7.500 7.500-7.500-7.500z"/><path d="M994.500 985.500l7.500 7.500-7.500 7.500-7.500-7.500z"/><path d="M1534.500 985.500l7.500 7.500-7.500 7.500-7.500-7.500z"/>
  <circle cx="1550" cy="1003" r="6"/>
 </g>
 <path d="M990 646h9M994.500 641.500v9" stroke="#3fa0dc" stroke-width="1" fill="none"/>
 <g fill="#fff" stroke="#8cc4ea" stroke-width="1"><rect x="457.500" y="280.500" width="6" height="6"/></g>
 <rect x="459.500" y="283.500" width="9" height="9" fill="#fff" stroke="#2f8fd0" stroke-width="1.200"/><rect x="462.500" y="286.500" width="3.500" height="3.500" fill="#2f8fd0"/>
</svg>

<!-- TOOLBAR -->
<div class="abs" style="left:309px;top:82px;width:43px;height:532px;background:#595959;border-radius:5px"></div>
<div class="tb" style="top:89px;height:69px;border-radius:5px"></div>
<div class="tb" style="top:89px;height:34.500px;background:#6b6b6b;border-radius:5px 5px 0 0"></div>
<div class="tb" style="top:166px;height:252px;border-radius:5px"></div>
<div class="tb" style="top:425px;height:142px;border-radius:5px"></div>
<div class="tb" style="top:575px;height:34px;border-radius:5px"></div>
<div class="abs" style="left:313px;top:201.5px;width:34px;height:1.500px;background:#454545"></div>
<div class="abs" style="left:313px;top:238px;width:34px;height:1.500px;background:#454545"></div>
<div class="abs" style="left:313px;top:274.5px;width:34px;height:1.500px;background:#454545"></div>
<div class="abs" style="left:313px;top:310.5px;width:34px;height:1.500px;background:#454545"></div>
<div class="abs" style="left:313px;top:347px;width:34px;height:1.500px;background:#454545"></div>
<div class="abs" style="left:313px;top:383px;width:34px;height:1.500px;background:#454545"></div>
<div class="abs" style="left:313px;top:460.5px;width:34px;height:1.500px;background:#454545"></div>
<div class="abs" style="left:313px;top:496px;width:34px;height:1.500px;background:#454545"></div>
<div class="abs" style="left:313px;top:531.5px;width:34px;height:1.500px;background:#454545"></div>
<svg class="abs" style="left:313px;top:86px" width="34" height="526" viewBox="313 86 34 526">
 <!-- select arrow -->
 <path d="M323 94v21l5-4.500 3.500 8 3-1.300-3.500-8h6.500z" fill="#4f4f4f" stroke="#fff" stroke-width="1.600" stroke-linejoin="round"/>
 <!-- multi select -->
 <circle cx="322.500" cy="134" r="4" fill="#2f7fc4" stroke="#e0e0e0" stroke-width="1.200"/><circle cx="334" cy="134" r="4" fill="#777" stroke="#d0d0d0" stroke-width="1.200"/><circle cx="322.500" cy="145" r="4" fill="#777" stroke="#d0d0d0" stroke-width="1.200"/><circle cx="334" cy="145" r="4" fill="#777" stroke="#d0d0d0" stroke-width="1.200"/>
 <path d="M332 138v14l3.500-3 2.500 5 2.200-1-2.500-5h4.500z" fill="#555" stroke="#e8e8e8" stroke-width="1.200" stroke-linejoin="round"/>
 <!-- pen -->
 <path d="M319 194l4-13 8-5 6 7-5 8z" fill="#555" stroke="#d8d8d8" stroke-width="1.500" stroke-linejoin="round"/><path d="M319 194l7-7" stroke="#d8d8d8" stroke-width="1.300"/><rect x="333" y="172" width="6.500" height="6.500" transform="rotate(45 336 175)" fill="#2f7fc4"/>
 <!-- rect -->
 <rect x="320" y="210" width="20" height="20" fill="#235f94" stroke="#d8d8d8" stroke-width="1.400"/>
 <!-- circle -->
 <circle cx="330" cy="256" r="10.500" fill="#235f94" stroke="#d8d8d8" stroke-width="1.400"/>
 <!-- polygon -->
 <path d="M330 282l11 8-4 13h-14l-4-13z" fill="#235f94" stroke="#d8d8d8" stroke-width="1.400" stroke-linejoin="round"/><path d="M342 298v6h-6z" fill="#d8d8d8"/>
 <!-- line -->
 <path d="M321 339l18-18" stroke="#b8b8b8" stroke-width="2"/>
 <!-- text -->
 <rect x="318" y="352" width="24" height="25" fill="none" stroke="#777" stroke-width="1"/><path d="M324 357h12M330 357v17M326 374h8" stroke="#c8c8c8" stroke-width="2.200" fill="none"/>
 <!-- spiral -->
 <rect x="318" y="388" width="24" height="25" fill="none" stroke="#777" stroke-width="1"/><path d="M318 388l24 25M342 388l-24 25" stroke="#666" stroke-width=".8"/><path d="M330 401a2 2 0 0 1 3-2a4.500 4.500 0 0 1 0 7a7 7 0 0 1-9-3a8.500 8.500 0 0 1 6-11a9 9 0 0 1 9 3" fill="none" stroke="#d8d8d8" stroke-width="2.300" stroke-linecap="round"/>
 <!-- linear repeat -->
 <circle cx="321" cy="442" r="3.200" fill="#2f7fc4" stroke="#d8d8d8" stroke-width="1.200"/><ellipse cx="330" cy="442" rx="3.300" ry="6" fill="#777" stroke="#d8d8d8" stroke-width="1.200"/><ellipse cx="339" cy="442" rx="3.300" ry="7" fill="#666" stroke="#d8d8d8" stroke-width="1.200"/>
 <!-- path repeat -->
 <circle cx="323" cy="470" r="3.200" fill="#2f7fc4" stroke="#d8d8d8" stroke-width="1.200"/><circle cx="330" cy="477.500" r="3.200" fill="#777" stroke="#d8d8d8" stroke-width="1.200"/><circle cx="336.500" cy="484" r="3.200" fill="#777" stroke="#d8d8d8" stroke-width="1.200"/><path d="M342 483v7h-7z" fill="#d8d8d8"/>
 <!-- grid repeat (selected) -->
 <rect x="317" y="501" width="26" height="26" fill="#2f86d3"/>
 <g fill="#235f94" stroke="#e0e0e0" stroke-width="1.200"><circle cx="322" cy="505.500" r="3"/><circle cx="330" cy="505.500" r="3" fill="#5a6a78"/><circle cx="338" cy="505.500" r="3" fill="#5a6a78"/><circle cx="322" cy="513.500" r="3" fill="#5a6a78"/><circle cx="330" cy="513.500" r="3" fill="#5a6a78"/><circle cx="338" cy="513.500" r="3" fill="#5a6a78"/><circle cx="322" cy="521.500" r="3" fill="#5a6a78"/><circle cx="330" cy="521.500" r="3" fill="#5a6a78"/></g><path d="M343 520v7h-7z" fill="#e0e0e0"/>
 <!-- radial repeat -->
 <g fill="#777" stroke="#d8d8d8" stroke-width="1.200"><circle cx="330" cy="540" r="3.200" fill="#2f7fc4"/><circle cx="322.500" cy="545.500" r="3.200"/><circle cx="337.500" cy="545.500" r="3.200"/><circle cx="322.500" cy="554" r="3.200"/><circle cx="337.500" cy="554" r="3.200"/><circle cx="330" cy="559" r="3.200"/></g><path d="M343 555v7h-7z" fill="#d8d8d8"/>
 <!-- hand -->
 <path d="M322 590l2 8 3 4h8l3-5 2-9-2-.500-2 6-.500-10-2-.200-.800 9-.700-11-2.200 0-.300 11-1.500-9-2 .300.500 10-2.200-5z" fill="#e0e0e0" stroke="#e0e0e0" stroke-width="1" stroke-linejoin="round"/><path d="M326 596v4M329 596v5M332 596v5M335 596v4" stroke="#333" stroke-width="1"/>
</svg>

<div class="panel" style="left:1649px;top:8px;width:394px;height:1102px">
<div class="phead"></div>
<div class="t ht" style="left:8px;top:5px;font-size:17px;">Selection</div>
<svg class="abs" style="left:368px;top:6px" width="20" height="18" viewBox="0 0 20 18"><path d="M8 2H2v14h14v-5" fill="none" stroke="#d8d8d8" stroke-width="1.600"/><circle cx="13" cy="6" r="4" fill="none" stroke="#d8d8d8" stroke-width="1.600"/><path d="M16 9l3.500 3.500" stroke="#d8d8d8" stroke-width="2"/></svg>
<svg class="abs" style="left:7px;top:39px" width="20" height="20" viewBox="0 0 20 20"><g fill="none" stroke="#e0e0e0" stroke-width="1.4"><rect x="1.500" y="1.500" width="10" height="10"/></g><rect x="6.500" y="6.500" width="12" height="12" fill="#2f2f2f" stroke="#4a9be0" stroke-width="1.500"/><rect x="10" y="10" width="5" height="5" fill="#4a9be0"/></svg>
<div class="t w" style="left:32px;top:38px;font-size:17px;">Tile pattern</div>
<svg class="abs" style="left:369px;top:42px" width="18" height="12" viewBox="0 0 18 12"><path d="M1 6q8-9 16 0q-8 9-16 0z" fill="none" stroke="#8a8a8a" stroke-width="1.300"/><circle cx="9" cy="6" r="2.600" fill="none" stroke="#8a8a8a" stroke-width="1.300"/></svg>
<div class="t g" style="left:5px;top:65px;font-size:15.5px;">Node sequence</div>
<div class="abs" style="left:384px;top:67px;width:10px;height:653px;background:#6a6a6a;border-radius:5px"></div>
<div class="abs" style="left:4.5px;top:90.6px;width:373.3px;height:38.4px;background:#4f4f4f;border-radius:5px 5px 0 0"></div>
<div class="tri" style="left:13px;top:106px;border-top-color:#9a9a9a"></div>
<svg class="abs" style="left:31px;top:99px" width="21" height="21" viewBox="0 0 21 21"><g fill="none" stroke="#d8d8d8" stroke-width="1.4"><rect x="1.500" y="1.500" width="10" height="10"/></g><rect x="6.500" y="6.500" width="12" height="12" fill="#4f4f4f" stroke="#4a9be0" stroke-width="1.500"/><rect x="10" y="10" width="5" height="5" fill="#4a9be0"/></svg>
<div class="t w" style="left:56px;top:99.5px;font-size:17px;">Instance</div>
<div class="dots3" style="left:350px;top:108px"><i style="left:0"></i><i style="left:6px"></i><i style="left:12px"></i></div>
<div class="abs" style="left:4.5px;top:129px;width:373.3px;height:93px;background:#3c3c3c;"></div>
<div class="abs" style="left:4.5px;top:129px;width:92.5px;height:93px;background:#fff;"></div>
<svg class="abs" style="left:12px;top:137px" width="77" height="77" viewBox="0 0 100 100"><g><path d="M0 12A88 88 0 0 1 88 100L12 100A12 12 0 0 0 0 88Z" fill="#b9eadb"/><path d="M0 88.000A12.000 12.000 0 0 1 12.000 100M0 75.333A24.667 24.667 0 0 1 24.667 100M0 62.667A37.333 37.333 0 0 1 37.333 100M0 50.000A50.000 50.000 0 0 1 50.000 100M0 37.333A62.667 62.667 0 0 1 62.667 100M0 24.667A75.333 75.333 0 0 1 75.333 100M0 12.000A88.000 88.000 0 0 1 88.000 100" fill="none" stroke="#000" stroke-width="1.6"/><path d="M12 0A88 88 0 0 0 100 88L100 12A12 12 0 0 1 88 0Z" fill="#b9eadb"/><path d="M88.000 0A12.000 12.000 0 0 0 100 12.000M75.333 0A24.667 24.667 0 0 0 100 24.667M62.667 0A37.333 37.333 0 0 0 100 37.333M50.000 0A50.000 50.000 0 0 0 100 50.000M37.333 0A62.667 62.667 0 0 0 100 62.667M24.667 0A75.333 75.333 0 0 0 100 75.333M12.000 0A88.000 88.000 0 0 0 100 88.000" fill="none" stroke="#000" stroke-width="1.6"/></g></svg>
<div class="t g" style="left:109px;top:133px;font-size:15.5px;">Parent layer</div>
<svg class="abs" style="left:120px;top:157px" width="17" height="17" viewBox="0 0 18 18"><g fill="none" stroke="#d8d8d8" stroke-width="1.400"><rect x="1.500" y="1.500" width="15" height="15"/><rect x="5" y="5" width="8" height="8"/></g></svg>
<div class="t " style="left:145px;top:155px;font-size:16px;color:#1a78c2">Tile</div>
<div class="abs" style="left:96px;top:157px;width:17px;height:17px;border-radius:50%;background:#1c1c1c;border:1.5px solid #2a2a2a"></div>
<div class="abs" style="left:100.5px;top:161.5px;width:8px;height:8px;border-radius:50%;background:#2a86d0"></div>
<div class="abs" style="left:89px;top:164px;width:14px;height:3px;background:#2a86d0"></div>
<div class="cb" style="left:108px;top:187px"></div>
<div class="t g" style="left:125px;top:183px;font-size:15.5px;">Pick element from group</div>
<div class="abs" style="left:4.5px;top:222px;width:373.3px;height:37px;background:#4f4f4f;"></div>
<div class="tri" style="left:13px;top:236.5px;border-top-color:#9a9a9a"></div>
<div class="t w" style="left:30px;top:230.5px;font-size:17px;">Comment</div>
<div class="dots3" style="left:350px;top:238.5px"><i style="left:0"></i><i style="left:6px"></i><i style="left:12px"></i></div>
<div class="notch" style="left:184px;top:222px"></div>
<div class="abs" style="left:4.5px;top:259px;width:373.3px;height:61px;background:#3c3c3c;"></div>
<div class="t it" style="left:15px;top:265px;font-size:14.2px;">Here we first scale the tile group down to match the</div>
<div class="t it" style="left:15px;top:289px;font-size:14.2px;">desired size set by the connected tile size parameter</div>
<div class="abs" style="left:4.5px;top:320px;width:373.3px;height:39px;background:#4f4f4f;"></div>
<div class="tri" style="left:13px;top:335.5px;border-top-color:#9a9a9a"></div>
<svg class="abs" style="left:31px;top:329.5px" width="21" height="21" viewBox="0 0 21 21"><g fill="none" stroke="#e8e8e8" stroke-width="1.500"><path d="M17.500 8a8 8 0 1 0 .5 6"/><path d="M10 5.500v10M5 10.500h10"/></g><path d="M15 3.500l4.500 1-1 4.500z" fill="#e8e8e8"/></svg>
<div class="t w" style="left:56px;top:329.5px;font-size:17px;">Transform 1</div>
<div class="dots3" style="left:350px;top:337.5px"><i style="left:0"></i><i style="left:6px"></i><i style="left:12px"></i></div>
<div class="notch" style="left:184px;top:320px;border-top-color:#3c3c3c"></div>
<div class="abs" style="left:4.5px;top:359px;width:373.3px;height:358px;background:#3c3c3c;"></div>
<div class="abs" style="left:4.5px;top:359px;width:92.5px;height:358px;background:#fff;"></div>
<svg class="abs" style="left:12px;top:367px" width="77" height="77" viewBox="0 0 100 100"><g><path d="M0 12A88 88 0 0 1 88 100L12 100A12 12 0 0 0 0 88Z" fill="#b9eadb"/><path d="M0 88.000A12.000 12.000 0 0 1 12.000 100M0 75.333A24.667 24.667 0 0 1 24.667 100M0 62.667A37.333 37.333 0 0 1 37.333 100M0 50.000A50.000 50.000 0 0 1 50.000 100M0 37.333A62.667 62.667 0 0 1 62.667 100M0 24.667A75.333 75.333 0 0 1 75.333 100M0 12.000A88.000 88.000 0 0 1 88.000 100" fill="none" stroke="#000" stroke-width="1.6"/><path d="M12 0A88 88 0 0 0 100 88L100 12A12 12 0 0 1 88 0Z" fill="#b9eadb"/><path d="M88.000 0A12.000 12.000 0 0 0 100 12.000M75.333 0A24.667 24.667 0 0 0 100 24.667M62.667 0A37.333 37.333 0 0 0 100 37.333M50.000 0A50.000 50.000 0 0 0 100 50.000M37.333 0A62.667 62.667 0 0 0 100 62.667M24.667 0A75.333 75.333 0 0 0 100 75.333M12.000 0A88.000 88.000 0 0 0 100 88.000" fill="none" stroke="#000" stroke-width="1.6"/></g></svg>
<div class="t g" style="left:107px;top:364px;font-size:15.5px;">Apply to</div>
<div class="abs" style="left:269px;top:364px;width:101px;height:23px;background:#2b2b2b;border-radius:4px"></div>
<div class="abs" style="left:269px;top:364px;width:33px;height:23px;background:#606060;border-radius:4px 0 0 4px"></div>
<div class="abs" style="left:302.5px;top:364px;width:1.0px;height:23px;background:#3c3c3c;"></div>
<div class="abs" style="left:336.5px;top:364px;width:1.0px;height:23px;background:#3c3c3c;"></div>
<svg class="abs" style="left:269px;top:364px" width="101" height="23" viewBox="0 0 101 23"><circle cx="16.500" cy="11.5" r="4.500" fill="#fff"/><circle cx="47.5" cy="8.8" r="2.300" fill="#fff"/><circle cx="47.5" cy="14.2" r="2.300" fill="#fff"/><circle cx="53.0" cy="8.8" r="2.300" fill="#fff"/><circle cx="53.0" cy="14.2" r="2.300" fill="#fff"/><circle cx="81" cy="8.8" r="2.300" fill="#fff"/><circle cx="86.5" cy="8.8" r="2.300" fill="#999"/><circle cx="81" cy="14.2" r="2.300" fill="#999"/><circle cx="86.5" cy="14.2" r="2.300" fill="#fff"/></svg>
<div class="cb" style="left:108px;top:401px"></div>
<div class="t g" style="left:125px;top:397px;font-size:15.5px;">Offset</div>
<div class="cb" style="left:108px;top:424px"></div>
<div class="t g" style="left:125px;top:420px;font-size:15.5px;">Rotate</div>
<div class="cbc" style="left:108px;top:447.5px"><svg width="12" height="12" viewBox="0 0 12 12" style="display:block"><path d="M2.500 6.200l2.500 2.600 4.500-5.500" fill="none" stroke="#222" stroke-width="2"/></svg></div>
<div class="t g" style="left:125px;top:443.5px;font-size:14.6px;">Scale</div>
<div class="abs" style="left:106px;top:465px;width:264px;height:161.6px;background:#484848;border-radius:5px"></div>
<div class="tri" style="left:116px;top:476px;border-top-color:#8a8a8a"></div>
<svg class="abs" style="left:133px;top:471px" width="20" height="20" viewBox="0 0 20 20"><g fill="#e0e0e0"><circle cx="2.500" cy="5" r="1.500"/><circle cx="2.500" cy="9.500" r="1.500"/><circle cx="2.500" cy="14" r="1.500"/></g><path d="M4 3.500a6 6 0 0 1 0 12" fill="none" stroke="#e0e0e0" stroke-width="1.200"/><path d="M17 3.500q-3.500-1.500-4.500 3l-1.800 8q-.8 3.500-3.700 2.500M8.500 8.500h7" fill="none" stroke="#e8e8e8" stroke-width="1.700"/></svg>
<div class="t w" style="left:158px;top:470px;font-size:16.4px;">Expression 2d</div>
<div class="dots3" style="left:342px;top:478px"><i style="left:0"></i><i style="left:6px"></i><i style="left:12px"></i></div>
<div class="abs" style="left:102px;top:506px;width:18px;height:18px;border-radius:50%;background:#2a2a2a;border:1.500px solid #3a3a3a"></div>
<div class="abs" style="left:107.5px;top:511.5px;width:7px;height:7px;border-radius:50%;background:#b8b8b8"></div>
<div class="t w" style="left:127px;top:505px;font-size:17px;">size</div>
<div class="inp inpd" style="left:199px;top:500px;width:64px;height:31px;line-height:31px;font-size:16.5px">60</div>
<div class="abs" style="left:358px;top:506px;width:18px;height:18px;border-radius:50%;background:#2c2c2c;border:1.500px solid #3f3f3f"></div>
<div class="abs" style="left:364.5px;top:512.5px;width:5px;height:5px;border-radius:50%;background:#555"></div>
<div class="t g" style="left:117px;top:536px;font-size:15px;">Expressions f(x,y)</div>
<div class="abs" style="left:115px;top:559px;width:248px;height:31px;background:#1f1f1f;"></div>
<div class="t w" style="left:121px;top:564.5px;font-size:16.5px;">size/100</div>
<div class="cbc" style="left:116px;top:602.5px"><svg width="12" height="12" viewBox="0 0 12 12" style="display:block"><path d="M2.500 6.200l2.500 2.600 4.500-5.500" fill="none" stroke="#222" stroke-width="2"/></svg></div>
<div class="t g" style="left:133px;top:598.5px;font-size:15px;">Single expression</div>
<div class="notch" style="left:119px;top:626.6px;border-top-color:#484848;border-left-width:6px;border-right-width:6px"></div>
<div class="inp inpd" style="left:108px;top:637px;width:63.5px;height:31px;line-height:31px;font-size:16.5px">0.6</div>
<div class="t dim" style="left:177px;top:642px;font-size:15.5px;color:#8a8a8a">x</div>
<div class="inp inpd" style="left:190px;top:637px;width:64px;height:31px;line-height:31px;font-size:16.5px">0.6</div>
<div class="abs" style="left:365px;top:640px;width:14px;height:26px;border-radius:7px;background:#2c2c2c;border:1.500px solid #444"></div>
<div class="abs" style="left:371px;top:646px;width:4px;height:4px;border-radius:50%;background:#555"></div><div class="abs" style="left:371px;top:655px;width:4px;height:4px;border-radius:50%;background:#555"></div>
<div class="abs" style="left:108px;top:678px;width:50px;height:27px;background:#2e2e2e;border-radius:4px"></div>
<div class="abs" style="left:162px;top:678px;width:50px;height:27px;background:#2e2e2e;border-radius:4px"></div>
<svg class="abs" style="left:123px;top:683px" width="20" height="18" viewBox="0 0 20 18"><path d="M9 2v14H2z" fill="#4a9be0"/><path d="M11 2v14h7z" fill="#c8c8c8"/></svg>
<svg class="abs" style="left:177px;top:683px" width="20" height="18" viewBox="0 0 20 18"><path d="M3 8.300V.500l14 7.800z" fill="#4a9be0"/><path d="M3 9.700v7.800l14-7.800z" fill="#b0b0b0"/></svg>
<div class="abs" style="left:4.5px;top:717px;width:373.3px;height:38px;background:#4f4f4f;"></div>
<div class="tri" style="left:13px;top:732.0px;border-top-color:#9a9a9a"></div>
<div class="t w" style="left:56px;top:726.0px;font-size:16.4px;">Repeat Area</div>
<div class="dots3" style="left:350px;top:734.0px"><i style="left:0"></i><i style="left:6px"></i><i style="left:12px"></i></div>
<svg class="abs" style="left:31px;top:726px" width="20" height="20" viewBox="0 0 20 20"><rect x="0" y="0" width="20" height="20" fill="#2f86d3"/><g fill="#3c4e5e" stroke="#e8e8e8" stroke-width="1.200"><circle cx="4" cy="4" r="2.300"/><circle cx="4" cy="10" r="2.300"/><circle cx="4" cy="16" r="2.300"/><circle cx="10" cy="4" r="2.300"/><circle cx="10" cy="10" r="2.300"/><circle cx="10" cy="16" r="2.300"/><circle cx="16" cy="4" r="2.300"/><circle cx="16" cy="10" r="2.300"/><circle cx="16" cy="16" r="2.300"/></g></svg>
<div class="notch" style="left:184px;top:717px"></div>
<div class="abs" style="left:4.5px;top:755px;width:373.3px;height:266.5px;background:#3c3c3c;"></div>
<div class="abs" style="left:4.5px;top:755px;width:92.5px;height:266.5px;background:#fff;"></div>
<div class="abs" style="left:12px;top:777px;width:77px;height:49.500px;background:#8db3a8 repeating-linear-gradient(90deg,rgba(175,215,200,.55) 0,rgba(175,215,200,.55) 1px,transparent 1px,transparent 5.500px)"></div>
<div class="t g" style="left:109px;top:759px;font-size:15.5px;">Repetition area</div>
<div class="abs" style="left:93px;top:786px;width:18px;height:24px;border-radius:9px;background:#2a2a2a;border:1.500px solid #484848;clip-path:inset(0 0 0 4px)"></div>
<div class="inp " style="left:119px;top:782px;width:64px;height:31px;line-height:31px;font-size:16.5px">810</div>
<div class="t dim" style="left:188px;top:787px;font-size:15.5px;color:#8a8a8a">x</div>
<div class="inp " style="left:201.5px;top:782px;width:64.0px;height:31px;line-height:31px;font-size:16.5px">502</div>
<svg class="abs" style="left:271px;top:787px" width="8" height="20" viewBox="0 0 7 19"><g fill="none" stroke="#b0b0b0" stroke-width="1.300"><circle cx="3.500" cy="3.200" r="2.200"/><circle cx="3.500" cy="9.500" r="2.200"/><circle cx="3.500" cy="15.800" r="2.200"/><path d="M3.500 5.400v1.900M3.500 11.700v1.900"/></g></svg>
<svg class="abs" style="left:280px;top:789px" width="11" height="15" viewBox="0 0 11 15"><path d="M2.500 7V4a3 3 0 0 1 6 0" fill="none" stroke="#aaa" stroke-width="1.500"/><rect x="1" y="7" width="9" height="7" rx="1" fill="#aaa"/></svg>
<div class="t dim" style="left:299px;top:787px;font-size:15.5px;color:#8a8a8a">px</div>
<div class="abs" style="left:365px;top:784px;width:14px;height:26px;border-radius:7px;background:#2c2c2c;border:1.500px solid #444"></div>
<div class="abs" style="left:371px;top:790px;width:4px;height:4px;border-radius:50%;background:#555"></div><div class="abs" style="left:371px;top:799px;width:4px;height:4px;border-radius:50%;background:#555"></div>
<div class="t g" style="left:109px;top:818px;font-size:15.5px;">Grid pattern</div>
<div class="abs" style="left:108px;top:841px;width:262px;height:31px;background:#2b2b2b;border-radius:5px"></div>
<svg class="abs" style="left:115px;top:847px" width="20" height="20" viewBox="0 0 20 20"><g fill="#3c4e5e" stroke="#e8e8e8" stroke-width="1.300"><circle cx="3.5" cy="3.5" r="2.400"/><circle cx="3.5" cy="10.0" r="2.400"/><circle cx="3.5" cy="16.5" r="2.400"/><circle cx="10.0" cy="3.5" r="2.400"/><circle cx="10.0" cy="10.0" r="2.400"/><circle cx="10.0" cy="16.5" r="2.400"/><circle cx="16.5" cy="3.5" r="2.400"/><circle cx="16.5" cy="10.0" r="2.400"/><circle cx="16.5" cy="16.5" r="2.400"/></g></svg>
<div class="t w" style="left:141px;top:846.5px;font-size:17px;">Straight grid</div>
<svg class="abs" style="left:348px;top:852px" width="14" height="10" viewBox="0 0 14 10"><path d="M2 2.500l5 5 5-5" fill="none" stroke="#c8c8c8" stroke-width="1.800"/></svg>
<div class="t g" style="left:109px;top:877px;font-size:15.5px;">Fixed</div>
<div class="abs" style="left:108px;top:901px;width:262px;height:25.6px;background:#2b2b2b;border-radius:4px"></div>
<div class="abs" style="left:238px;top:901px;width:132px;height:25.6px;background:#606060;border-radius:0 4px 4px 0"></div>
<div class="t w" style="left:108px;top:903.8px;width:130px;text-align:center;font-size:16px;-webkit-text-stroke:.5px #e8e8e8;color:#e8e8e8">Count</div>
<div class="t w" style="left:238px;top:903.8px;width:132px;text-align:center;font-size:16px;-webkit-text-stroke:.5px #fff;color:#fff">Spacing</div>
<div class="t g" style="left:109px;top:932px;font-size:15.5px;">Spacing</div>
<div class="abs" style="left:93px;top:958px;width:18px;height:24px;border-radius:9px;background:#2a2a2a;border:1.500px solid #484848;clip-path:inset(0 0 0 4px)"></div>
<div class="abs" style="left:100px;top:965px;width:8px;height:8px;border-radius:50%;background:#c0c0c0"></div>
<div class="inp inpd" style="left:119px;top:955px;width:64px;height:31px;line-height:31px;font-size:16.5px">60</div>
<div class="t dim" style="left:188px;top:960px;font-size:15.5px;color:#8a8a8a">x</div>
<div class="inp inpd" style="left:201.5px;top:955px;width:64.0px;height:31px;line-height:31px;font-size:16.5px">60</div>
<svg class="abs" style="left:271px;top:960px" width="8" height="20" viewBox="0 0 7 19"><g fill="none" stroke="#e0e0e0" stroke-width="1.300"><circle cx="3.500" cy="3.200" r="2.200"/><circle cx="3.500" cy="9.500" r="2.200"/><circle cx="3.500" cy="15.800" r="2.200"/><path d="M3.500 5.400v1.900M3.500 11.700v1.900"/></g></svg>
<svg class="abs" style="left:280px;top:962px" width="11" height="15" viewBox="0 0 11 15"><path d="M2.500 7V4.500a3 3 0 0 1 6 0V7" fill="none" stroke="#e8e8e8" stroke-width="1.600"/><rect x="1" y="7" width="9" height="7" rx="1" fill="#e8e8e8"/></svg>
<div class="t dim" style="left:299px;top:960px;font-size:15.5px;color:#8a8a8a">px</div>
<div class="abs" style="left:365px;top:957px;width:14px;height:26px;border-radius:7px;background:#2c2c2c;border:1.500px solid #444"></div>
<div class="abs" style="left:371px;top:963px;width:4px;height:4px;border-radius:50%;background:#555"></div><div class="abs" style="left:371px;top:972px;width:4px;height:4px;border-radius:50%;background:#555"></div>
<div class="cb" style="left:108px;top:997px"></div>
<div class="t g" style="left:125px;top:993px;font-size:15px;">Margin-based spacing</div>
<div class="abs" style="left:4.5px;top:1021.5px;width:373.3px;height:38.0px;background:#4f4f4f;"></div>
<div class="tri" style="left:13px;top:1036.5px;border-top-color:#9a9a9a"></div>
<svg class="abs" style="left:31px;top:1030.5px" width="21" height="21" viewBox="0 0 21 21"><g fill="none" stroke="#e8e8e8" stroke-width="1.500"><path d="M17.500 8a8 8 0 1 0 .5 6"/><path d="M10 5.500v10M5 10.500h10"/></g><path d="M15 3.500l4.500 1-1 4.500z" fill="#e8e8e8"/></svg>
<div class="t w" style="left:56px;top:1030.5px;font-size:17px;">Transform 2</div>
<div class="dots3" style="left:350px;top:1038.5px"><i style="left:0"></i><i style="left:6px"></i><i style="left:12px"></i></div>
<div class="notch" style="left:184px;top:1021.5px"></div>
<div class="abs" style="left:4.5px;top:1059.5px;width:373.3px;height:42.5px;background:#3c3c3c;"></div>
<div class="abs" style="left:4.5px;top:1059.5px;width:92.5px;height:42.5px;background:#fff;"></div>
<div class="abs" style="left:12px;top:1081px;width:77px;height:21px;background:#8db3a8 repeating-linear-gradient(90deg,rgba(175,215,200,.55) 0,rgba(175,215,200,.55) 1px,transparent 1px,transparent 5.500px)"></div>
<div class="t g" style="left:107px;top:1065px;font-size:15.5px;">Apply to</div>
<div class="abs" style="left:269px;top:1065px;width:101px;height:23px;background:#2b2b2b;border-radius:4px"></div>
<div class="abs" style="left:303px;top:1065px;width:33px;height:23px;background:#606060;border-radius:0"></div>
<div class="abs" style="left:302.5px;top:1065px;width:1.0px;height:23px;background:#3c3c3c;"></div>
<div class="abs" style="left:336.5px;top:1065px;width:1.0px;height:23px;background:#3c3c3c;"></div>
<svg class="abs" style="left:269px;top:1065px" width="101" height="23" viewBox="0 0 101 23"><circle cx="16.500" cy="11.5" r="4.500" fill="#fff"/><circle cx="47.5" cy="8.8" r="2.300" fill="#fff"/><circle cx="47.5" cy="14.2" r="2.300" fill="#fff"/><circle cx="53.0" cy="8.8" r="2.300" fill="#fff"/><circle cx="53.0" cy="14.2" r="2.300" fill="#fff"/><circle cx="81" cy="8.8" r="2.300" fill="#fff"/><circle cx="86.5" cy="8.8" r="2.300" fill="#999"/><circle cx="81" cy="14.2" r="2.300" fill="#999"/><circle cx="86.5" cy="14.2" r="2.300" fill="#fff"/></svg>
</div>
<!-- right socket dots/stems (outside panel) -->
<div class="stem" style="left:288px;top:98.500px;width:18px"></div><div class="dot" style="left:284.500px;top:96.500px"></div>
<div class="stem" style="left:288px;top:143.500px;width:18px"></div><div class="dot" style="left:284.500px;top:141.500px"></div>
<div class="stem" style="left:288px;top:189px;width:18px"></div><div class="dot" style="left:284.500px;top:187px"></div>
<svg class="abs" style="left:283px;top:229px" width="24" height="12"><path d="M2 6a4 4 0 0 1 4-4L22 5.500L22 6.500L6 10a4 4 0 0 1-4-4z" fill="#1fa61f"/></svg>
<div class="dot" style="left:284.500px;top:308.500px;background:#c4c4c4"></div>
<div class="stem" style="left:288px;top:355px;width:12px"></div><div class="dot" style="left:284.500px;top:353px"></div>
<!-- connections overlay -->
<svg class="abs" style="left:0;top:0;pointer-events:none" width="2048" height="1117" viewBox="0 0 2048 1117">
 <g fill="none" stroke="#c4c2c2" stroke-width="3.400" stroke-linecap="round" opacity=".96">
  <path d="M289 312C459 312 1609 523 1759 523"/>
  <path d="M289 312C429 312 1622 976 1752 976"/>
 </g>
</svg>
<!-- tooltip -->
<div class="abs" style="left:299px;top:333.300px;width:412.500px;height:26.500px;background:#050505;box-shadow:0 6px 14px rgba(0,0,0,.35)"></div>
<div class="t" style="left:310px;top:336px;font-size:16.100px;color:#dcdcdc">Tile size&nbsp; output socket, click or drag to add connection</div>
</body></html>
